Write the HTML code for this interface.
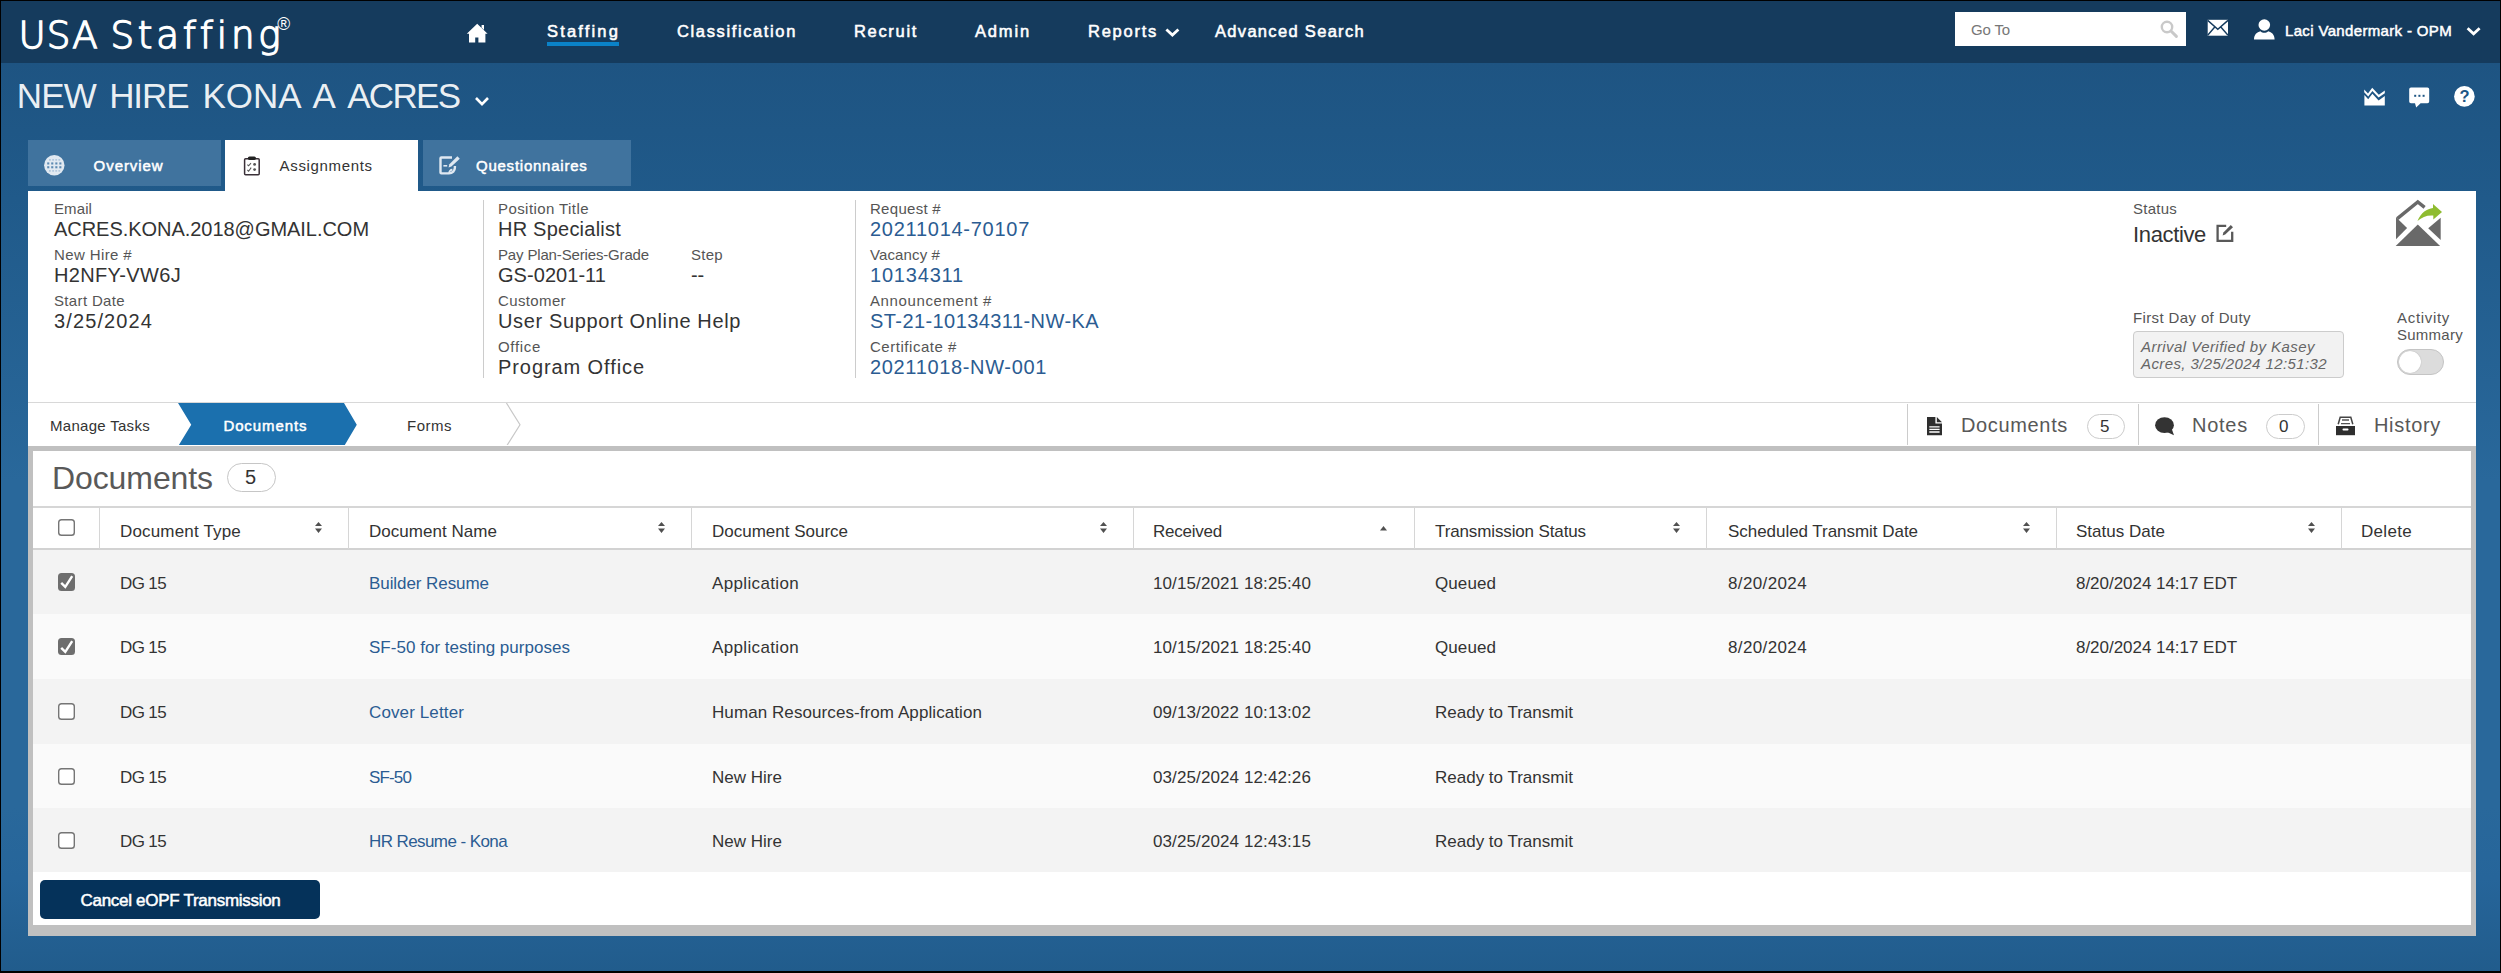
<!DOCTYPE html>
<html lang="en"><head><meta charset="utf-8"><title>USA Staffing - New Hire</title>
<style>
html,body{margin:0;padding:0}
body{width:2501px;height:973px;overflow:hidden;background:#000;position:relative;font-family:"Liberation Sans",sans-serif}
.t{position:absolute;white-space:nowrap;line-height:1;display:block}
.b{position:absolute;display:block}
svg{position:absolute;overflow:visible}
</style></head><body>

<div class="chrome" aria-hidden="true">
<div class="b" style="left:1px;top:1px;width:2498.6px;height:970px;background:linear-gradient(180deg,#1e5482 0%,#1e5482 6.4%,#205a8a 20.5%,#29689b 49.5%,#29689b 83%,#26659a 90.5%,#215c8c 100%);"></div>
<div class="b" style="left:1px;top:1px;width:2498.6px;height:62px;background:#153b5d;"></div>
<div class="b" style="left:547px;top:42px;width:71.5px;height:4px;background:#0a82c8;"></div>
<div class="b" style="left:1955px;top:11.6px;width:231px;height:34.6px;background:#fff;"></div>
<div class="b" style="left:28px;top:139.8px;width:192.8px;height:46.4px;background:#40739e;"></div>
<div class="b" style="left:224.8px;top:139.8px;width:193.2px;height:52px;background:#fff;"></div>
<div class="b" style="left:423px;top:139.8px;width:208.3px;height:46.4px;background:#40739e;"></div>
<div class="b" style="left:28px;top:191px;width:2448px;height:745px;background:#fff;"></div>
<div class="b" style="left:483px;top:200px;width:1px;height:178px;background:#ccc;"></div>
<div class="b" style="left:855px;top:200px;width:1px;height:178px;background:#ccc;"></div>
<div class="b" style="left:2133px;top:331px;width:209px;height:45px;background:#f2f2f2;border:1px solid #ccc;border-radius:4px;"></div>
<div class="b" style="left:2397px;top:348.5px;width:47px;height:26px;background:#dcdcdc;border-radius:13px;border:1px solid #c4c4c4;box-sizing:border-box;"></div>
<div class="b" style="left:2399px;top:350.5px;width:22px;height:22px;background:#fff;border-radius:50%;box-shadow:0 0 1px #999;"></div>
<div class="b" style="left:28px;top:402.3px;width:2448px;height:1.2px;background:#d8d8d8;"></div>
<div class="b" style="left:1907px;top:404px;width:1px;height:41px;background:#ccc;"></div>
<div class="b" style="left:2138px;top:404px;width:1px;height:41px;background:#ccc;"></div>
<div class="b" style="left:2318px;top:404px;width:1px;height:41px;background:#ccc;"></div>
<div class="b" style="left:28px;top:445.6px;width:2448px;height:490.2px;background:#c0c0c0;"></div>
<div class="b" style="left:32.7px;top:450.8px;width:2438.3px;height:474.6px;background:#fff;"></div>
<div class="b" style="left:33px;top:506.2px;width:2438px;height:1.4px;background:#d6d6d6;"></div>
<div class="b" style="left:33px;top:548px;width:2438px;height:2px;background:#d2d2d2;"></div>
<div class="b" style="left:98.5px;top:507px;width:1.4px;height:42px;background:#d6d6d6;"></div>
<div class="b" style="left:347.5px;top:507px;width:1.4px;height:42px;background:#d6d6d6;"></div>
<div class="b" style="left:690.5px;top:507px;width:1.4px;height:42px;background:#d6d6d6;"></div>
<div class="b" style="left:1132.5px;top:507px;width:1.4px;height:42px;background:#d6d6d6;"></div>
<div class="b" style="left:1413.5px;top:507px;width:1.4px;height:42px;background:#d6d6d6;"></div>
<div class="b" style="left:1705.5px;top:507px;width:1.4px;height:42px;background:#d6d6d6;"></div>
<div class="b" style="left:2055.5px;top:507px;width:1.4px;height:42px;background:#d6d6d6;"></div>
<div class="b" style="left:2340.5px;top:507px;width:1.4px;height:42px;background:#d6d6d6;"></div>
<div class="b" style="left:33px;top:550px;width:2438px;height:64.39999999999998px;background:#f3f3f3;"></div>
<div class="b" style="left:33px;top:614.4px;width:2438px;height:64.60000000000002px;background:#fafafa;"></div>
<div class="b" style="left:33px;top:679px;width:2438px;height:64.5px;background:#f3f3f3;"></div>
<div class="b" style="left:33px;top:743.5px;width:2438px;height:64.60000000000002px;background:#fafafa;"></div>
<div class="b" style="left:33px;top:808.1px;width:2438px;height:64.39999999999998px;background:#f3f3f3;"></div>
<div class="b" style="left:2087px;top:414px;width:36px;height:23px;background:#fff;border:1px solid #ccc;border-radius:13px;"></div>
<div class="b" style="left:2266px;top:414px;width:37px;height:23px;background:#fff;border:1px solid #ccc;border-radius:13px;"></div>
<div class="b" style="left:226.8px;top:463.4px;width:47.6px;height:26.4px;background:#fff;border:1px solid #c6c6c6;border-radius:15px;"></div>
<div class="b" style="left:39.6px;top:879.6px;width:280.8px;height:39px;background:#05325a;border-radius:5px;"></div>
<div class="b" style="left:58px;top:519.4px;width:17px;height:17px;background:#fff;box-shadow:inset 0 0 0 1.4px #757575;border-radius:3.5px;"></div>
<div class="b" style="left:58px;top:573.4px;width:17.2px;height:17.2px;background:#6e6e6e;border-radius:3.5px;"></div>
<svg style="left:58px;top:573.4px" width="17" height="17" viewBox="0 0 17 17"><path d="M3.2 9.8 L7.3 13.9 L14.2 3.2" fill="none" stroke="#fff" stroke-width="2.4"/></svg>
<div class="b" style="left:58px;top:637.9px;width:17.2px;height:17.2px;background:#6e6e6e;border-radius:3.5px;"></div>
<svg style="left:58px;top:637.9px" width="17" height="17" viewBox="0 0 17 17"><path d="M3.2 9.8 L7.3 13.9 L14.2 3.2" fill="none" stroke="#fff" stroke-width="2.4"/></svg>
<div class="b" style="left:58px;top:702.8px;width:17px;height:17px;background:#fff;box-shadow:inset 0 0 0 1.4px #757575;border-radius:3.5px;"></div>
<div class="b" style="left:58px;top:767.5px;width:17px;height:17px;background:#fff;box-shadow:inset 0 0 0 1.4px #757575;border-radius:3.5px;"></div>
<div class="b" style="left:58px;top:832.0px;width:17px;height:17px;background:#fff;box-shadow:inset 0 0 0 1.4px #757575;border-radius:3.5px;"></div>
<svg style="left:178px;top:403.3px;overflow:hidden" width="180" height="42.2" viewBox="0 0 180 42.2"><path d="M0 0 H166 L178.8 21.7 L166 43.4 H0 L13.2 21.7 Z" fill="#1b70ae"/></svg>
<svg style="left:505px;top:403.3px;overflow:hidden" width="17" height="42.2" viewBox="0 0 17 42.2"><path d="M1.4 0 L15 21.7 L1.4 43.4" fill="none" stroke="#c8c8c8" stroke-width="1.2"/></svg>
<svg style="left:314.9px;top:521.9px" width="7" height="11" viewBox="0 0 7 11"><path d="M0 4.1 L3.5 0 L7 4.1 Z M0 6.6 L3.5 10.9 L7 6.6 Z" fill="#505050"/></svg>
<svg style="left:657.5px;top:521.9px" width="7" height="11" viewBox="0 0 7 11"><path d="M0 4.1 L3.5 0 L7 4.1 Z M0 6.6 L3.5 10.9 L7 6.6 Z" fill="#505050"/></svg>
<svg style="left:1099.5px;top:521.9px" width="7" height="11" viewBox="0 0 7 11"><path d="M0 4.1 L3.5 0 L7 4.1 Z M0 6.6 L3.5 10.9 L7 6.6 Z" fill="#505050"/></svg>
<svg style="left:1672.5px;top:521.9px" width="7" height="11" viewBox="0 0 7 11"><path d="M0 4.1 L3.5 0 L7 4.1 Z M0 6.6 L3.5 10.9 L7 6.6 Z" fill="#505050"/></svg>
<svg style="left:2022.5px;top:521.9px" width="7" height="11" viewBox="0 0 7 11"><path d="M0 4.1 L3.5 0 L7 4.1 Z M0 6.6 L3.5 10.9 L7 6.6 Z" fill="#505050"/></svg>
<svg style="left:2307.5px;top:521.9px" width="7" height="11" viewBox="0 0 7 11"><path d="M0 4.1 L3.5 0 L7 4.1 Z M0 6.6 L3.5 10.9 L7 6.6 Z" fill="#505050"/></svg>
<svg style="left:1380.1px;top:525.8px" width="7" height="5" viewBox="0 0 7 5"><path d="M0 4.4 L3.5 0 L7 4.4 Z" fill="#505050"/></svg>
<svg style="left:466px;top:23px" width="23" height="20" viewBox="0 0 23 20"><path d="M11.2 0.8 L0.8 10.8 H3 V19.4 H9.2 V14.6 H12.4 V19.4 H19.4 V10.8 H21.6 Z" fill="#fff"/><path d="M15.6 2 H18 V7 L15.6 4.6 Z" fill="#fff"/></svg>
<svg style="left:1164px;top:27px" width="17" height="11" viewBox="0 0 17 11"><path d="M2.4 2.4 L8.4 8 L14.4 2.4" fill="none" stroke="#fff" stroke-width="2.8"/></svg>
<svg style="left:2159px;top:19px" width="20" height="20" viewBox="0 0 20 20"><circle cx="8" cy="8" r="5.2" fill="none" stroke="#c9c9c9" stroke-width="2.4"/><path d="M12 12 L17.4 17.4" stroke="#c9c9c9" stroke-width="3" stroke-linecap="round"/></svg>
<svg style="left:2207px;top:19px" width="22" height="18" viewBox="0 0 22 18"><rect x="0.7" y="0.8" width="20.3" height="15.9" fill="#fff"/><path d="M0.7 1.4 L10.8 10.2 L21 1.4 M0.7 16.2 L8 7.8 M21 16.2 L13.6 7.8" fill="none" stroke="#153b5d" stroke-width="1.4"/></svg>
<svg style="left:2253px;top:18px" width="23" height="23" viewBox="0 0 23 23"><circle cx="11.3" cy="7" r="5.8" fill="#fff"/><path d="M1 21.5 C1 16.5 4 14 7.4 13.2 C9.6 15.4 13 15.4 15.2 13.2 C18.6 14 21.6 16.5 21.6 21.5 Z" fill="#fff"/></svg>
<svg style="left:2465px;top:26px" width="17" height="11" viewBox="0 0 17 11"><path d="M2.6 2.2 L8.6 7.8 L14.6 2.2" fill="none" stroke="#fff" stroke-width="2.8"/></svg>
<svg style="left:474px;top:95px" width="16" height="13" viewBox="0 0 16 13"><path d="M2 3 L8 9.2 L14 3" fill="none" stroke="#fff" stroke-width="2.6"/></svg>
<svg style="left:2364px;top:87px" width="22" height="19" viewBox="0 0 22 19"><path d="M0.2 2.4 L4 6.6 L8.2 0.8 L14.8 7.8 L20.8 3.6 L20.8 6.2 L14.6 10.6 L8.4 4 L4.2 9.6 L0.2 5.2 Z" fill="#fff"/><path d="M0.4 8 L4.2 12.2 L8.4 6.8 L14.6 13.4 L20.8 9 V18.4 H0.4 Z" fill="#fff"/></svg>
<svg style="left:2409px;top:87px" width="21" height="21" viewBox="0 0 21 21"><path d="M2 0.4 H18.4 A1.8 1.8 0 0 1 20.2 2.2 V14.4 A1.8 1.8 0 0 1 18.4 16.2 H11.6 L7.2 20.6 L6 16.2 H2 A1.8 1.8 0 0 1 0.2 14.4 V2.2 A1.8 1.8 0 0 1 2 0.4 Z" fill="#fff"/><rect x="5.2" y="7.8" width="2" height="2" fill="#1e5684"/><rect x="9.4" y="7.8" width="2" height="2" fill="#1e5684"/><rect x="13.6" y="7.8" width="2" height="2" fill="#1e5684"/></svg>
<svg style="left:2454px;top:86px" width="21" height="21" viewBox="0 0 21 21"><circle cx="10.4" cy="10.4" r="10.3" fill="#fff"/><text x="10.5" y="16.2" font-family="Liberation Sans, sans-serif" font-weight="700" font-size="16.5" fill="#1e5684" text-anchor="middle">?</text></svg>
<svg style="left:44px;top:154.7px" width="21" height="21" viewBox="0 0 21 21"><circle cx="10.3" cy="10.3" r="10.2" fill="#e1e9f1"/><rect x="3.2" y="7.4" width="2.1" height="2.1" fill="#5d8ab2"/><rect x="3.2" y="11.2" width="2.1" height="2.1" fill="#5d8ab2"/><rect x="7.2" y="7.4" width="2.1" height="2.1" fill="#5d8ab2"/><rect x="7.2" y="11.2" width="2.1" height="2.1" fill="#5d8ab2"/><rect x="11.3" y="7.4" width="2.1" height="2.1" fill="#5d8ab2"/><rect x="11.3" y="11.2" width="2.1" height="2.1" fill="#5d8ab2"/><rect x="15.3" y="7.4" width="2.1" height="2.1" fill="#5d8ab2"/><rect x="15.3" y="11.2" width="2.1" height="2.1" fill="#5d8ab2"/><rect x="5" y="4.2" width="1.8" height="1.4" fill="#a9c1d8"/><rect x="5" y="15.2" width="1.8" height="1.4" fill="#a9c1d8"/><rect x="8.2" y="4.2" width="1.8" height="1.4" fill="#a9c1d8"/><rect x="8.2" y="15.2" width="1.8" height="1.4" fill="#a9c1d8"/><rect x="11.3" y="4.2" width="1.8" height="1.4" fill="#a9c1d8"/><rect x="11.3" y="15.2" width="1.8" height="1.4" fill="#a9c1d8"/><rect x="14.4" y="4.2" width="1.8" height="1.4" fill="#a9c1d8"/><rect x="14.4" y="15.2" width="1.8" height="1.4" fill="#a9c1d8"/></svg>
<svg style="left:243px;top:156px" width="18" height="20" viewBox="0 0 18 20"><rect x="1.6" y="2.8" width="14.6" height="15.9" rx="1" fill="#fff" stroke="#3a3038" stroke-width="1.5"/><rect x="4.8" y="0.6" width="8.2" height="3.4" rx="1.7" fill="#222"/><path d="M4.4 8.6 L5.6 9.8 L8 7.2 M4.4 14 L5.6 15.2 L8.2 11.6" fill="none" stroke="#555" stroke-width="1.1"/><circle cx="11.6" cy="8.4" r="1.4" fill="#555"/><circle cx="11.6" cy="13.6" r="1.4" fill="#555"/></svg>
<svg style="left:439px;top:155px" width="22" height="21" viewBox="0 0 22 21"><path d="M13 2.5 H2.3 A0.8 0.8 0 0 0 1.5 3.3 V17.6 A0.8 0.8 0 0 0 2.3 18.4 H10 C13.6 18.4 15.9 15.6 15.9 12.6 V11" fill="none" stroke="#dfe8f1" stroke-width="2.4"/><path d="M10 18 C10.4 15.6 11.2 14.8 13.4 14.6" fill="none" stroke="#dfe8f1" stroke-width="1.6"/><path d="M18.4 1.2 L20.8 3.8 L12.4 11.4 L9.6 12.4 L10.4 9.2 Z" fill="#dfe8f1"/><path d="M4.4 10.8 H8.2" stroke="#dfe8f1" stroke-width="1.6"/></svg>
<svg style="left:2216px;top:224px" width="19" height="19" viewBox="0 0 19 19"><path d="M10.2 1.8 H1.6 V16.8 H16.2 V7.8" fill="none" stroke="#595959" stroke-width="2.3"/><path d="M14.8 1 L17 3.2 L9.2 10.6 L6.6 11.4 L7.4 8.6 Z" fill="#595959"/></svg>
<svg style="left:2388px;top:194px" width="60" height="58" viewBox="0 0 60 58"><path d="M9.3 24.6 L29.8 7.9 L36.6 13.3" fill="none" stroke="#696969" stroke-width="3.4"/><path d="M8 23.2 L19.1 34 L8 45.3 Z" fill="#696969"/><path d="M52.7 23.8 L40.2 34.3 L52.7 45.9 Z" fill="#696969"/><path d="M7.7 51.9 L29.8 30.4 L52.1 51.9 Z" fill="#696969"/><path d="M29.5 26.9 C33 18.6 39 14.7 45 14 L45 10 L54 17.9 L45.3 25.4 L45.3 21.5 C39 21 34 23 29.5 26.9 Z" fill="#8fbc30"/></svg>
<svg style="left:1927px;top:416.6px" width="15" height="18.4" viewBox="0 0 15 18.4"><path d="M0 0 H8.4 V6.4 H15 V18.3 H0 Z" fill="#2e2e2e"/><path d="M9.8 0 L15 5.2 H9.8 Z" fill="#2e2e2e"/><path d="M2.3 9.8 H12.6 M2.3 12.4 H12.6 M2.3 15 H12.6" stroke="#fff" stroke-width="1.3"/></svg>
<svg style="left:2155px;top:416.6px" width="20" height="19" viewBox="0 0 20 19"><ellipse cx="9.5" cy="8.2" rx="9.4" ry="7.9" fill="#333"/><path d="M12 15 L19 18.2 L16.4 11 Z" fill="#333"/></svg>
<svg style="left:2336px;top:416px" width="19" height="20" viewBox="0 0 19 20"><path d="M2.2 8.2 L4.2 1.2 H14.8 L16.8 8.2" fill="none" stroke="#444" stroke-width="1.5"/><path d="M6 4 H13 M5 7.6 H14" stroke="#555" stroke-width="1.4"/><rect x="0" y="10" width="19" height="9.2" fill="#2e2e2e"/><rect x="6.5" y="12.6" width="6" height="1.9" rx="0.9" fill="#fff"/></svg>
</div>
<nav class="site-nav">
<span class="t" style="left:18.4px;top:16.73px;font-size:37.2px;color:#fff;font-weight:200;font-family:'DejaVu Sans Light', 'DejaVu Sans', sans-serif;letter-spacing:1.177px;-webkit-text-stroke:1.4px #fff;">USA</span>
<span class="t" style="left:110.4px;top:16.73px;font-size:37.2px;color:#fff;font-weight:200;font-family:'DejaVu Sans Light', 'DejaVu Sans', sans-serif;letter-spacing:3.836px;-webkit-text-stroke:1.4px #fff;">Staffing</span>
<span class="t" style="left:277.3px;top:15.79px;font-size:17.5px;color:#fff;">&reg;</span>
<span class="t" style="left:547px;top:23.13px;font-size:16.5px;color:#fff;letter-spacing:2.168px;-webkit-text-stroke:0.55px #fff;">Staffing</span>
<span class="t" style="left:677px;top:23.13px;font-size:16.5px;color:#fff;letter-spacing:1.627px;-webkit-text-stroke:0.55px #fff;">Classification</span>
<span class="t" style="left:854px;top:23.13px;font-size:16.5px;color:#fff;letter-spacing:1.676px;-webkit-text-stroke:0.55px #fff;">Recruit</span>
<span class="t" style="left:975px;top:23.13px;font-size:16.5px;color:#fff;letter-spacing:1.844px;-webkit-text-stroke:0.55px #fff;">Admin</span>
<span class="t" style="left:1088px;top:23.13px;font-size:16.5px;color:#fff;letter-spacing:1.746px;-webkit-text-stroke:0.55px #fff;">Reports</span>
<span class="t" style="left:1215px;top:23.13px;font-size:16.5px;color:#fff;letter-spacing:1.316px;-webkit-text-stroke:0.55px #fff;">Advanced Search</span>
<span class="t" style="left:1971px;top:21.80px;font-size:15px;color:#777;letter-spacing:-0.150px;">Go To</span>
<span class="t" style="left:2285px;top:22.90px;font-size:15px;color:#fff;letter-spacing:0.344px;-webkit-text-stroke:0.5px #fff;">Laci Vandermark - OPM</span>
</nav>
<header class="page-title">
<span class="t" style="left:16.8px;top:77.87px;font-size:35px;color:rgba(255,255,255,0.92);letter-spacing:-0.885px;">NEW</span>
<span class="t" style="left:109.2px;top:77.87px;font-size:35px;color:rgba(255,255,255,0.92);letter-spacing:-1.106px;">HIRE</span>
<span class="t" style="left:202.6px;top:77.87px;font-size:35px;color:rgba(255,255,255,0.92);letter-spacing:-0.101px;">KONA</span>
<span class="t" style="left:312.59999999999997px;top:77.87px;font-size:35px;color:rgba(255,255,255,0.92);letter-spacing:0.441px;">A</span>
<span class="t" style="left:347.2px;top:77.87px;font-size:35px;color:rgba(255,255,255,0.92);letter-spacing:-1.679px;">ACRES</span>
<span class="t" style="left:93.6px;top:158.10px;font-size:15px;color:#fff;letter-spacing:0.936px;-webkit-text-stroke:0.5px #fff;">Overview</span>
<span class="t" style="left:279.6px;top:158.10px;font-size:15px;color:#333;letter-spacing:0.648px;">Assignments</span>
<span class="t" style="left:476px;top:158.10px;font-size:15px;color:#fff;letter-spacing:0.757px;-webkit-text-stroke:0.5px #fff;">Questionnaires</span>
</header>
<section class="new-hire-summary">
<span class="t" style="left:54px;top:200.80px;font-size:15px;color:#555;letter-spacing:0.097px;">Email</span>
<span class="t" style="left:54px;top:219.07px;font-size:20px;color:#333;letter-spacing:-0.038px;">ACRES.KONA.2018@GMAIL.COM</span>
<span class="t" style="left:54px;top:246.80px;font-size:15px;color:#555;letter-spacing:0.381px;">New Hire #</span>
<span class="t" style="left:54px;top:265.07px;font-size:20px;color:#333;letter-spacing:0.327px;">H2NFY-VW6J</span>
<span class="t" style="left:54px;top:292.80px;font-size:15px;color:#555;letter-spacing:0.347px;">Start Date</span>
<span class="t" style="left:54px;top:311.07px;font-size:20px;color:#333;letter-spacing:1.113px;">3/25/2024</span>
<span class="t" style="left:498px;top:200.80px;font-size:15px;color:#555;letter-spacing:0.425px;">Position Title</span>
<span class="t" style="left:498px;top:219.07px;font-size:20px;color:#333;letter-spacing:0.227px;">HR Specialist</span>
<span class="t" style="left:498px;top:246.80px;font-size:15px;color:#555;letter-spacing:-0.154px;">Pay Plan-Series-Grade</span>
<span class="t" style="left:498px;top:265.07px;font-size:20px;color:#333;letter-spacing:0.052px;">GS-0201-11</span>
<span class="t" style="left:691px;top:246.80px;font-size:15px;color:#555;letter-spacing:0.285px;">Step</span>
<span class="t" style="left:691px;top:265.07px;font-size:20px;color:#333;letter-spacing:-0.164px;">--</span>
<span class="t" style="left:498px;top:292.80px;font-size:15px;color:#555;letter-spacing:0.371px;">Customer</span>
<span class="t" style="left:498px;top:311.07px;font-size:20px;color:#333;letter-spacing:0.630px;">User Support Online Help</span>
<span class="t" style="left:498px;top:338.80px;font-size:15px;color:#555;letter-spacing:0.682px;">Office</span>
<span class="t" style="left:498px;top:357.07px;font-size:20px;color:#333;letter-spacing:0.920px;">Program Office</span>
<span class="t" style="left:870px;top:200.80px;font-size:15px;color:#555;letter-spacing:0.290px;">Request #</span>
<span class="t" style="left:870px;top:219.07px;font-size:20px;color:#2b5c92;letter-spacing:0.730px;">20211014-70107</span>
<span class="t" style="left:870px;top:246.80px;font-size:15px;color:#555;letter-spacing:0.118px;">Vacancy #</span>
<span class="t" style="left:870px;top:265.07px;font-size:20px;color:#2b5c92;letter-spacing:0.812px;">10134311</span>
<span class="t" style="left:870px;top:292.80px;font-size:15px;color:#555;letter-spacing:0.613px;">Announcement #</span>
<span class="t" style="left:870px;top:311.07px;font-size:20px;color:#2b5c92;letter-spacing:0.426px;">ST-21-10134311-NW-KA</span>
<span class="t" style="left:870px;top:338.80px;font-size:15px;color:#555;letter-spacing:0.535px;">Certificate #</span>
<span class="t" style="left:870px;top:357.07px;font-size:20px;color:#2b5c92;letter-spacing:0.656px;">20211018-NW-001</span>
<span class="t" style="left:2133px;top:200.80px;font-size:15px;color:#555;letter-spacing:0.245px;">Status</span>
<span class="t" style="left:2133px;top:224.38px;font-size:22px;color:#333;letter-spacing:-0.354px;">Inactive</span>
<span class="t" style="left:2133px;top:310.30px;font-size:15px;color:#555;letter-spacing:0.371px;">First Day of Duty</span>
<span class="t" style="left:2141px;top:339.30px;font-size:15px;color:#666;font-style:italic;letter-spacing:0.446px;">Arrival Verified by Kasey</span>
<span class="t" style="left:2141px;top:356.30px;font-size:15px;color:#666;font-style:italic;letter-spacing:0.401px;">Acres, 3/25/2024 12:51:32</span>
<span class="t" style="left:2397px;top:310.30px;font-size:15px;color:#555;letter-spacing:0.686px;">Activity</span>
<span class="t" style="left:2397px;top:327.30px;font-size:15px;color:#555;letter-spacing:0.259px;">Summary</span>
</section>
<section class="task-bar">
<span class="t" style="left:50px;top:418.30px;font-size:15px;color:#333;letter-spacing:0.296px;">Manage Tasks</span>
<span class="t" style="left:223.4px;top:417.90px;font-size:15px;color:#fff;letter-spacing:0.903px;-webkit-text-stroke:0.5px #fff;">Documents</span>
<span class="t" style="left:407px;top:418.30px;font-size:15px;color:#333;letter-spacing:0.500px;">Forms</span>
<span class="t" style="left:1961px;top:414.87px;font-size:20px;color:#585858;letter-spacing:0.649px;">Documents</span>
<span class="t" style="left:2100px;top:417.61px;font-size:17px;color:#333;">5</span>
<span class="t" style="left:2192px;top:414.87px;font-size:20px;color:#585858;letter-spacing:0.750px;">Notes</span>
<span class="t" style="left:2279px;top:417.61px;font-size:17px;color:#333;">0</span>
<span class="t" style="left:2374px;top:414.87px;font-size:20px;color:#585858;letter-spacing:0.681px;">History</span>
</section>
<main class="documents">
<span class="t" style="left:52px;top:461.91px;font-size:32px;color:#595959;letter-spacing:-0.094px;">Documents</span>
<span class="t" style="left:245px;top:467.07px;font-size:20px;color:#333;">5</span>
<span class="t" style="left:120px;top:522.91px;font-size:17px;color:#333;letter-spacing:0.172px;">Document Type</span>
<span class="t" style="left:369px;top:522.91px;font-size:17px;color:#333;letter-spacing:0.034px;">Document Name</span>
<span class="t" style="left:712px;top:522.91px;font-size:17px;color:#333;letter-spacing:-0.005px;">Document Source</span>
<span class="t" style="left:1153px;top:522.91px;font-size:17px;color:#333;letter-spacing:-0.234px;">Received</span>
<span class="t" style="left:1435px;top:522.91px;font-size:17px;color:#333;letter-spacing:-0.125px;">Transmission Status</span>
<span class="t" style="left:1728px;top:522.91px;font-size:17px;color:#333;letter-spacing:-0.039px;">Scheduled Transmit Date</span>
<span class="t" style="left:2076px;top:522.91px;font-size:17px;color:#333;letter-spacing:0.016px;">Status Date</span>
<span class="t" style="left:2361px;top:522.91px;font-size:17px;color:#333;letter-spacing:0.310px;">Delete</span>
<span class="t" style="left:120px;top:574.81px;font-size:17px;color:#333;letter-spacing:-0.628px;">DG 15</span>
<span class="t" style="left:369px;top:574.81px;font-size:17px;color:#2b5c92;letter-spacing:-0.068px;">Builder Resume</span>
<span class="t" style="left:712px;top:574.81px;font-size:17px;color:#333;letter-spacing:0.348px;">Application</span>
<span class="t" style="left:1153px;top:574.81px;font-size:17px;color:#333;letter-spacing:0.106px;">10/15/2021 18:25:40</span>
<span class="t" style="left:1435px;top:574.81px;font-size:17px;color:#333;letter-spacing:0.083px;">Queued</span>
<span class="t" style="left:1728px;top:574.81px;font-size:17px;color:#333;letter-spacing:0.373px;">8/20/2024</span>
<span class="t" style="left:2076px;top:574.81px;font-size:17px;color:#333;letter-spacing:-0.033px;">8/20/2024 14:17 EDT</span>
<span class="t" style="left:120px;top:639.31px;font-size:17px;color:#333;letter-spacing:-0.628px;">DG 15</span>
<span class="t" style="left:369px;top:639.31px;font-size:17px;color:#2b5c92;letter-spacing:0.026px;">SF-50 for testing purposes</span>
<span class="t" style="left:712px;top:639.31px;font-size:17px;color:#333;letter-spacing:0.348px;">Application</span>
<span class="t" style="left:1153px;top:639.31px;font-size:17px;color:#333;letter-spacing:0.106px;">10/15/2021 18:25:40</span>
<span class="t" style="left:1435px;top:639.31px;font-size:17px;color:#333;letter-spacing:0.083px;">Queued</span>
<span class="t" style="left:1728px;top:639.31px;font-size:17px;color:#333;letter-spacing:0.373px;">8/20/2024</span>
<span class="t" style="left:2076px;top:639.31px;font-size:17px;color:#333;letter-spacing:-0.033px;">8/20/2024 14:17 EDT</span>
<span class="t" style="left:120px;top:703.91px;font-size:17px;color:#333;letter-spacing:-0.628px;">DG 15</span>
<span class="t" style="left:369px;top:703.91px;font-size:17px;color:#2b5c92;letter-spacing:0.121px;">Cover Letter</span>
<span class="t" style="left:712px;top:703.91px;font-size:17px;color:#333;letter-spacing:0.081px;">Human Resources-from Application</span>
<span class="t" style="left:1153px;top:703.91px;font-size:17px;color:#333;letter-spacing:0.106px;">09/13/2022 10:13:02</span>
<span class="t" style="left:1435px;top:703.91px;font-size:17px;color:#333;">Ready to Transmit</span>
<span class="t" style="left:120px;top:768.61px;font-size:17px;color:#333;letter-spacing:-0.628px;">DG 15</span>
<span class="t" style="left:369px;top:768.61px;font-size:17px;color:#2b5c92;letter-spacing:-0.859px;">SF-50</span>
<span class="t" style="left:712px;top:768.61px;font-size:17px;color:#333;letter-spacing:0.012px;">New Hire</span>
<span class="t" style="left:1153px;top:768.61px;font-size:17px;color:#333;letter-spacing:0.106px;">03/25/2024 12:42:26</span>
<span class="t" style="left:1435px;top:768.61px;font-size:17px;color:#333;">Ready to Transmit</span>
<span class="t" style="left:120px;top:833.11px;font-size:17px;color:#333;letter-spacing:-0.628px;">DG 15</span>
<span class="t" style="left:369px;top:833.11px;font-size:17px;color:#2b5c92;letter-spacing:-0.587px;">HR Resume - Kona</span>
<span class="t" style="left:712px;top:833.11px;font-size:17px;color:#333;letter-spacing:0.012px;">New Hire</span>
<span class="t" style="left:1153px;top:833.11px;font-size:17px;color:#333;letter-spacing:0.106px;">03/25/2024 12:43:15</span>
<span class="t" style="left:1435px;top:833.11px;font-size:17px;color:#333;">Ready to Transmit</span>
<span class="t" style="left:80.5px;top:891.81px;font-size:17px;color:#fff;letter-spacing:-0.288px;-webkit-text-stroke:0.5px #fff;">Cancel eOPF Transmission</span>
</main>
</body></html>
